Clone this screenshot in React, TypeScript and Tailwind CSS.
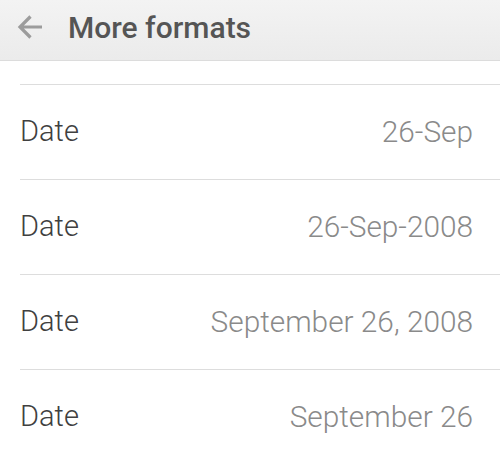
const rows = ["26-Sep", "26-Sep-2008", "September 26, 2008", "September 26"];

export default function App() {
  return (
    <div className="h-[449px] w-[500px] overflow-hidden bg-white" style={{ fontFamily: "Roboto, 'Liberation Sans', sans-serif" }}>
      {/* toolbar */}
      <div className="flex h-[61px] items-center border-b border-[#dcdcdc] bg-gradient-to-b from-[#f3f3f3] to-[#ebebeb]">
        <svg width="26" height="26" viewBox="0 0 26 26" className="ml-[17px] mb-[6px]" fill="none" stroke="#9c9c9c" strokeWidth="3.2">
          <path d="M25 13H3M13.5 2.5L3 13L13.5 23.5" />
        </svg>
        <span className="ml-[25px] mb-[5px] text-[30px] font-medium text-[#555]">More formats</span>
      </div>

      <div className="pt-[23px]">
        {rows.map((v) => (
          <div key={v} className="ml-5 flex h-[95px] items-center justify-between border-t border-[#dddddd] pr-[27px]">
            <span className="text-[29px] font-light text-[#404040]">Date</span>
            <span className="text-[29.8px] font-light text-[#8a8a8a]">{v}</span>
          </div>
        ))}
      </div>
    </div>
  );
}
